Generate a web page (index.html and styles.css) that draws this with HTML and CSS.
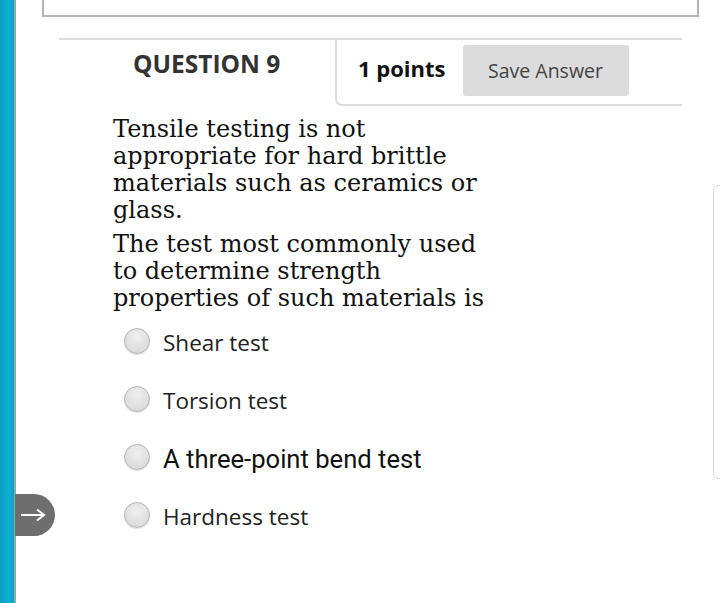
FILE: index.html
```html
<!DOCTYPE html>
<html>
<head>
<meta charset="utf-8">
<link rel="stylesheet" href="styles.css">
</head>
<body>
<div class="page">
  <div class="rail"></div>
  <div class="main">
    <div class="topbox"></div>
    <div class="qhead">
      <div class="qtitle">QUESTION 9</div>
      <div class="qpoints">
        <span class="pts">1 points</span>
        <button class="save">Save Answer</button>
      </div>
    </div>
    <div class="qbody">
      <p class="qtext">Tensile testing is not appropriate for hard brittle materials such as ceramics or glass.</p>
      <p class="qtext">The test most commonly used to determine strength properties of such materials is</p>
      <ul class="opts">
        <li class="opt"><span class="radio"></span><span class="lbl">Shear test</span></li>
        <li class="opt"><span class="radio"></span><span class="lbl">Torsion test</span></li>
        <li class="opt"><span class="radio"></span><span class="lbl alt">A three-point bend test</span></li>
        <li class="opt"><span class="radio"></span><span class="lbl">Hardness test</span></li>
      </ul>
    </div>
  </div>
  <div class="nextbtn">
    <svg width="26" height="14" viewBox="0 0 26 14"><path d="M1 7H24M17 1.5L24 7L17 12.5" fill="none" stroke="#fff" stroke-width="2"/></svg>
  </div>
  <div class="sidepanel"></div>
</div>
</body>
</html>
```
FILE: styles.css
```css
html, body {
  margin: 0;
  padding: 0;
  background: #fff;
}
.page {
  position: relative;
  display: flex;
  width: 720px;
  height: 603px;
  overflow: hidden;
}
.rail {
  width: 14px;
  flex: none;
  background: linear-gradient(90deg, #0b9fc4, #10b0d4 60%, #0ba3c6);
  border-right: 2px solid #8fa9b0;
}
.main {
  flex: 1;
  display: flex;
  flex-direction: column;
}
.topbox {
  margin-left: 26px;
  width: 653px;
  height: 15px;
  border: 2px solid #b4b4b4;
  border-top: none;
}
.qhead {
  margin-top: 21px;
  margin-left: 43px;
  width: 623px;
  border-top: 2px solid #dcdcdc;
  display: flex;
}
.qtitle {
  width: 202px;
  padding-left: 74px;
  padding-top: 7px;
  font-family: "Open Sans", sans-serif;
  font-weight: 700;
  font-size: 24.5px;
  color: #333;
}
.qpoints {
  flex: 1;
  height: 66px;
  border-left: 2px solid #dcdcdc;
  border-bottom: 2px solid #dcdcdc;
  border-bottom-left-radius: 7px;
  display: flex;
  align-items: flex-start;
  padding-left: 21px;
  padding-top: 5px;
  box-sizing: border-box;
}
.pts {
  font-family: "Open Sans", sans-serif;
  font-weight: 700;
  font-size: 22px;
  color: #111;
  margin-top: 8px;
}
.save {
  margin-left: 17px;
  width: 166px;
  height: 51px;
  background: #dcdcdc;
  border: none;
  border-radius: 3px;
  font-family: "Open Sans", sans-serif;
  font-size: 19.5px;
  color: #444;
  padding: 0;
}
.qbody {
  margin-left: 97px;
  margin-top: 10px;
}
.qtext {
  margin: 0 0 7px 0;
  width: 385px;
  font-family: "DejaVu Serif", serif;
  font-size: 24px;
  line-height: 27px;
  color: #111;
}
.qtext:last-of-type {
  margin-bottom: 0;
}
.opts {
  list-style: none;
  margin: 0;
  padding: 0;
}
.opt {
  display: flex;
  align-items: center;
  height: 58px;
  margin-left: 11px;
}
.radio {
  width: 24px;
  height: 24px;
  border-radius: 50%;
  border: 1px solid #b5b5b5;
  background: radial-gradient(circle at 50% 35%, #f0f0f0, #dcdcdc 70%, #d0d0d0);
  box-shadow: 0 1px 1px rgba(0,0,0,0.12);
  flex: none;
}
.lbl {
  margin-left: 13px;
  padding-top: 3px;
  font-family: "Open Sans", sans-serif;
  font-size: 22.5px;
  color: #222;
}
.lbl.alt {
  font-family: Roboto, sans-serif;
  font-size: 25.6px;
  color: #111;
}
.nextbtn {
  position: absolute;
  left: 15px;
  top: 494px;
  width: 40px;
  height: 42px;
  background: #6e6e6e;
  border-radius: 0 21px 21px 0;
  display: flex;
  align-items: center;
  justify-content: center;
  padding-right: 4px;
  box-sizing: border-box;
}
.sidepanel {
  position: absolute;
  left: 713px;
  top: 185px;
  width: 20px;
  height: 292px;
  border: 1px solid #d8d8d8;
  border-radius: 6px;
}
```
